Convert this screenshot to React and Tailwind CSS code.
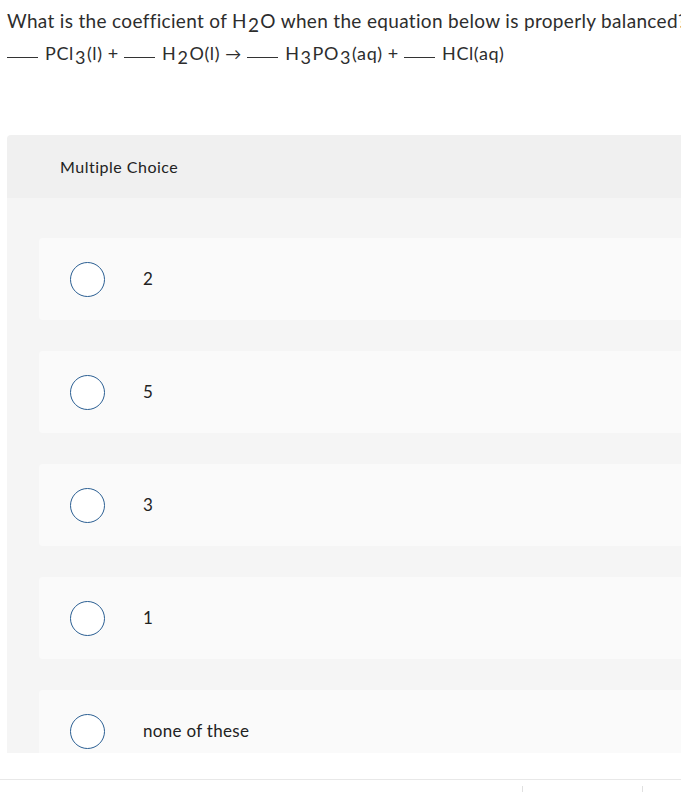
import React from 'react';

const options = ['2', '5', '3', '1', 'none of these'];

const Sub = ({ children }) => (
  <span className="relative top-[4px] mx-[1px]">{children}</span>
);

const Blank = () => <span className="inline-block w-[31px] border-b border-[#333] align-baseline mr-[7px] translate-y-[-2px]" />;

const App = () => {
  return (
    <div className="w-[681px] h-[792px] overflow-hidden bg-white text-[#2d2d2d] font-['Lato',sans-serif]">
      <div className="w-[760px]">
        {/* Question */}
        <div className="pl-[7px] pt-[8px]">
          <p className="text-[19px] tracking-[0.33px] leading-[26px] whitespace-nowrap">
            What is the coefficient of H<Sub>2</Sub>O when the equation below is properly balanced?
          </p>
          <p className="text-[18px] tracking-[0.6px] leading-[26px] mt-[6px] whitespace-nowrap">
            <Blank />PCl<Sub>3</Sub>(l) + <Blank />H<Sub>2</Sub>O(l) <span className="text-[16px]">→</span> <Blank />H<Sub>3</Sub>PO<Sub>3</Sub>(aq) + <Blank />HCl(aq)
          </p>
        </div>

        {/* Answer panel */}
        <div className="ml-[7px] mt-[68px] rounded-t-[4px] overflow-hidden">
          <div className="h-[63px] bg-[#f0f0f0] flex items-center pl-[53px]">
            <span className="text-[16px] tracking-[0.5px] text-[#222]">Multiple Choice</span>
          </div>
          <div className="h-[555px] overflow-hidden bg-[#f5f5f5] pt-[40px] pl-[32px] flex flex-col gap-[31px]">
            {options.map((opt) => (
              <div key={opt} className="shrink-0 h-[82px] bg-[#fafafa] rounded-[4px] flex items-center pl-[31px]">
                <span className="w-[35px] h-[35px] rounded-full border-[1.5px] border-[#2b5f93] bg-white shrink-0" />
                <span className="ml-[38px] text-[17px] tracking-[0.3px] text-[#222]">{opt}</span>
              </div>
            ))}
          </div>
        </div>

        {/* Footer */}
        <div className="mt-[26px] border-t border-[#e8e8e8] h-[20px] flex">
          <div className="w-[522px]" />
          <div className="w-[121px] border-l border-r border-[#e0e0e0] mt-[6px]" />
        </div>
      </div>
    </div>
  );
};

export default App;
